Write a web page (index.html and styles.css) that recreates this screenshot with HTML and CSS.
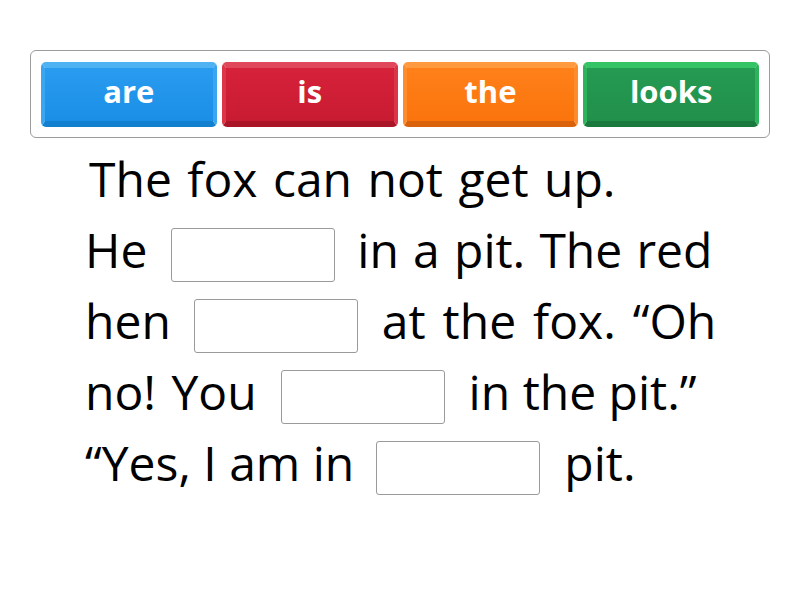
FILE: index.html
```html
<!DOCTYPE html>
<html>
<head>
<meta charset="utf-8">
<link rel="stylesheet" href="styles.css">
</head>
<body>
<div class="bank">
  <div class="tile blue">are</div>
  <div class="tile red">is</div>
  <div class="tile orange">the</div>
  <div class="tile green">looks</div>
</div>
<div class="text">
  <div class="line first ws3">The fox can not get up.</div>
  <div class="line"><span>He</span><span class="blank"></span><span class="ws2">in a pit. The red</span></div>
  <div class="line"><span>hen</span><span class="blank after-wide"></span><span class="ws4">at the fox. “Oh</span></div>
  <div class="line"><span class="ws3">no! You</span><span class="blank before-wide"></span><span>in the pit.”</span></div>
  <div class="line"><span>“Yes, I am in</span><span class="blank before-narrow"></span><span>pit.</span></div>
</div>
</body>
</html>
```
FILE: styles.css
```css
html, body {
  margin: 0;
  padding: 0;
  background: #ffffff;
  font-family: "Open Sans", "DejaVu Sans", sans-serif;
}
.bank {
  margin: 50px 30px 0 30px;
  border: 1px solid #9c9c9c;
  border-radius: 6px;
  padding: 11px 10px 0 10px;
  box-sizing: border-box;
  height: 88px;
  display: flex;
  gap: 5px;
}
.tile {
  flex: 1;
  height: 65px;
  box-sizing: border-box;
  border-radius: 5px;
  border-style: solid;
  border-width: 6px 4px 6px 4px;
  color: #ffffff;
  font-weight: 700;
  font-size: 31px;
  display: flex;
  align-items: center;
  justify-content: center;
  padding-bottom: 7px;
}
.blue {
  background: linear-gradient(#2a9cf0, #1a8fe6);
  border-color: #4fb2f3 #3aa6f2 #137fcf #3aa6f2;
}
.red {
  background: linear-gradient(#d6213a, #c81c32);
  border-color: #e0475b #dc3448 #aa1527 #dc3448;
}
.orange {
  background: linear-gradient(#ff8019, #fb740d);
  border-color: #ff9a3f #ff8b2a #d9620a #ff8b2a;
}
.green {
  background: linear-gradient(#259a52, #21904b);
  border-color: #34c466 #2cb35c #1a7a3d #2cb35c;
}
.text {
  margin-top: 5px;
  padding-left: 85px;
  font-size: 48px;
  color: #000000;
}
.line {
  height: 71px;
  display: flex;
  align-items: center;
  white-space: pre;
}
.line.first {
  padding-left: 4px;
}
.ws2 { word-spacing: 1.75px; }
.ws3 { word-spacing: 3px; }
.ws4 { word-spacing: 4.5px; }
.blank {
  width: 164px;
  height: 54px;
  box-sizing: border-box;
  border: 1px solid #9a9a9a;
  border-radius: 3px;
  margin: 10px 22px 0 24px;
  background: #ffffff;
}
.blank.after-wide { margin-right: 24px; margin-left: 23px; }
.blank.before-wide { margin-left: 24px; margin-right: 24px; }
.blank.before-narrow { margin-left: 22px; margin-right: 24px; }
```
